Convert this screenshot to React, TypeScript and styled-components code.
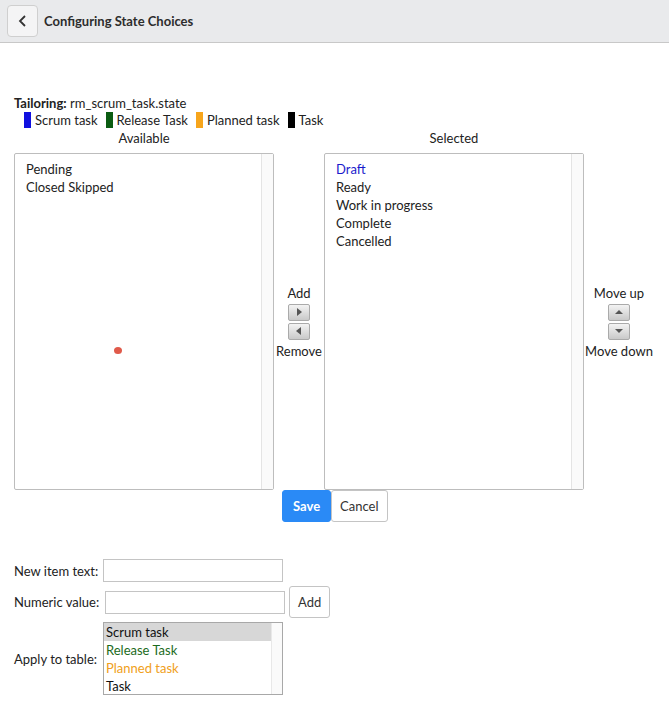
import React from "react";
import styled, { createGlobalStyle } from "styled-components";

const G = createGlobalStyle`
  body { margin: 0; font-family: Lato, "Open Sans", sans-serif; font-size: 13px; color: #222; background: #fff; }
`;
const Header = styled.div`
  height: 42px; background: #e9eaec; border-bottom: 1px solid #c8c8c8;
  display: flex; align-items: center; gap: 6px; padding-left: 7px;
`;
const Back = styled.div`
  width: 29px; height: 30px; border: 1px solid #cfcfcf; border-radius: 4px; background: #f4f4f5;
  display: flex; align-items: center; justify-content: center;
`;
const Title = styled.div` font-weight: 700; font-size: 13px; color: #2d2d2d; `;
const Body = styled.div` padding: 52px 14px 0; `;
const Tail = styled.div` line-height: 16px; b { font-weight: 700; } `;
const Legend = styled.div` display: flex; gap: 8px; padding-left: 10px; line-height: 18px; `;
const Key = styled.span<{ c: string }>`
  display: flex; align-items: center; gap: 4px;
  &::before { content: ""; width: 7px; height: 16px; background: ${p => p.c}; }
`;
const Lists = styled.div` display: grid; grid-template-columns: 260px 50px 260px 70px; `;
const ColHead = styled.div` text-align: center; line-height: 16px; margin: 1px 0 7px; `;
const Box = styled.div`
  position: relative; height: 337px; border: 1px solid #bdbdbd; border-radius: 2px;
  padding: 6px 11px; box-sizing: border-box; line-height: 18px;
  &::after { content: ""; position: absolute; right: 0; top: 0; bottom: 0; width: 11px; border-left: 1px solid #e4e4e4; background: #fafafa; }
`;
const Item = styled.div<{ c?: string }>` color: ${p => p.c || "#222"}; `;
const Mid = styled.div`
  display: flex; flex-direction: column; align-items: center; justify-content: center; gap: 2px; line-height: 18px;
`;
const Arrow = styled.div`
  width: 20px; height: 15px; border: 1px solid #aaa; border-radius: 2px;
  background: linear-gradient(#f3f3f3, #c9c9c9); display: flex; align-items: center; justify-content: center;
`;
const Actions = styled.div` display: flex; padding-left: 268px; `;
const Btn = styled.button<{ primary?: boolean }>`
  font: inherit; height: 32px; padding: 0 ${p => p.primary ? 10 : 8}px; border-radius: 3px; cursor: pointer;
  border: 1px solid ${p => p.primary ? "#2a8af6" : "#c4c4c4"};
  background: ${p => p.primary ? "#2a8af6" : "#fff"}; color: ${p => p.primary ? "#fff" : "#333"};
  font-weight: ${p => p.primary ? 700 : 400};
`;
const Form = styled.div` margin-top: 37px; display: grid; grid-template-columns: 89px auto; row-gap: 4px; align-items: center; `;
const Input = styled.input<{ w?: number }>`
  width: 180px; height: 23px; box-sizing: border-box; border: 1px solid #c4c4c4; margin-left: ${p => p.w || 0}px;
`;
const RowF = styled.div` display: flex; align-items: center; gap: 4px; `;
const Sel = styled.div`
  position: relative; width: 180px; height: 73px; border: 1px solid #a8a8a8; box-sizing: border-box; line-height: 18px;
  &::after { content: ""; position: absolute; right: 0; top: 0; bottom: 0; width: 10px; background: #fafafa; border-left: 1px solid #e8e8e8; }
`;
const Opt = styled.div<{ c?: string; sel?: boolean }>`
  padding-left: 2px; margin-right: 10px; color: ${p => p.c || "#111"}; background: ${p => p.sel ? "#d7d7d7" : "transparent"};
`;
const Dot = styled.div` position: absolute; left: 99px; top: 193px; width: 8px; height: 7px; border-radius: 50%; background: #e05a4a; `;

const tri = (d: string) => (
  <svg width="8" height="8" viewBox="0 0 8 8"><polygon points={d} fill="#555" /></svg>
);

export default function App() {
  return (
    <>
      <G />
      <Header>
        <Back><svg width="12" height="14" viewBox="0 0 12 14"><path d="M8 2 L3 7 L8 12" stroke="#333" strokeWidth="1.8" fill="none" /></svg></Back>
        <Title>Configuring State Choices</Title>
      </Header>
      <Body>
        <Tail><b>Tailoring:</b> rm_scrum_task.state</Tail>
        <Legend>
          <Key c="#1010e0">Scrum task</Key><Key c="#0b5c12">Release Task</Key>
          <Key c="#f7a51c">Planned task</Key><Key c="#000">Task</Key>
        </Legend>
        <Lists>
          <ColHead>Available</ColHead><div /><ColHead>Selected</ColHead><div />
          <Box><Item>Pending</Item><Item>Closed Skipped</Item><Dot /></Box>
          <Mid>Add<Arrow>{tri("2,0 7,4 2,8")}</Arrow><Arrow>{tri("6,0 1,4 6,8")}</Arrow>Remove</Mid>
          <Box>
            <Item c="#1a1acc">Draft</Item><Item>Ready</Item><Item>Work in progress</Item><Item>Complete</Item><Item>Cancelled</Item>
          </Box>
          <Mid>Move up<Arrow>{tri("0,6 4,2 8,6")}</Arrow><Arrow>{tri("0,2 4,6 8,2")}</Arrow>Move down</Mid>
        </Lists>
        <Actions><Btn primary>Save</Btn><Btn>Cancel</Btn></Actions>
        <Form>
          <span>New item text:</span><Input />
          <span>Numeric value:</span><RowF><Input w={2} /><Btn>Add</Btn></RowF>
          <span>Apply to table:</span>
          <Sel>
            <Opt sel>Scrum task</Opt><Opt c="#1c6b1c">Release Task</Opt><Opt c="#f0a020">Planned task</Opt><Opt>Task</Opt>
          </Sel>
        </Form>
      </Body>
    </>
  );
}
